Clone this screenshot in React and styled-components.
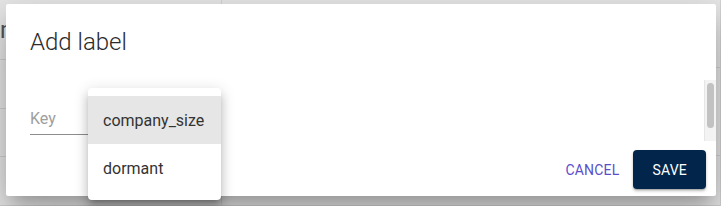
import React from 'react';
import styled, { createGlobalStyle } from 'styled-components';

const GlobalStyle = createGlobalStyle`
  html, body {
    margin: 0;
    padding: 0;
    background: #e8e8e8;
    font-family: Roboto, "Liberation Sans", sans-serif;
    overflow: hidden;
  }
`;

const Page = styled.div`
  position: relative;
  width: 721px;
  height: 206px;
  overflow: hidden;
  background: #e9e9e9;
`;

const Backdrop = styled.div`
  display: grid;
  grid-template-columns: 222px 1fr;
  height: 100%;
`;

const BackColumn = styled.div`
  display: flex;
  flex-direction: column;
  border-right: 1px solid #d6d6d6;
`;

const BackRow = styled.div`
  height: ${p => p.h}px;
  border-bottom: 1px solid #d3d3d3;
  color: #555;
  box-sizing: border-box;
  display: flex;
  align-items: center;
  justify-content: ${p => (p.right ? 'flex-end' : 'flex-start')};
  font-size: ${p => p.size || 14}px;
`;

const Dialog = styled.div`
  position: absolute;
  left: 6px;
  top: 4px;
  width: 710px;
  height: 192px;
  background: #fff;
  border-radius: 2px;
  box-shadow: 0 11px 15px -7px rgba(0, 0, 0, 0.2), 0 24px 38px 3px rgba(0, 0, 0, 0.14),
    0 9px 46px 8px rgba(0, 0, 0, 0.12);
  display: flex;
  flex-direction: column;
  box-sizing: border-box;
`;

const Title = styled.h2`
  margin: 0;
  padding: 24px 24px 0 24px;
  font-size: 24px;
  font-weight: 300;
  line-height: 28px;
  color: #2b2b2b;
`;

const Content = styled.div`
  padding: 49px 24px 0 24px;
`;

const Field = styled.div`
  width: 180px;
  border-bottom: 1px solid #8c8c8c;
  padding: 4px 0 6px 0;
`;

const Placeholder = styled.span`
  font-size: 16px;
  line-height: 19px;
  color: #9e9e9e;
`;

const Actions = styled.div`
  margin-top: auto;
  display: flex;
  justify-content: flex-end;
  align-items: center;
  gap: 6px;
  padding: 0 10px 7px 0;
`;

const Button = styled.button`
  font-family: Roboto, "Liberation Sans", sans-serif;
  font-size: 14px;
  font-weight: 400;
  letter-spacing: 0.2px;
  text-transform: uppercase;
  border: none;
  border-radius: 4px;
  height: 39px;
  cursor: pointer;
  padding: 0 ${p => (p.primary ? 19 : 8)}px;
  min-width: ${p => (p.primary ? 72 : 0)}px;
  color: ${p => (p.primary ? '#fff' : '#5a4fc9')};
  background: ${p => (p.primary ? '#02264b' : 'transparent')};
  box-shadow: ${p =>
    p.primary ? '0 2px 3px rgba(0,0,0,0.25), 0 1px 1px rgba(0,0,0,0.14)' : 'none'};
`;

const Scrollbar = styled.div`
  position: absolute;
  right: 0;
  top: 76px;
  width: 12px;
  height: 61px;
  background: #f3f3f3;
  border-left: 1px solid #e6e6e6;
  box-sizing: border-box;
  display: flex;
  justify-content: center;
  padding-top: 3px;
`;

const Thumb = styled.div`
  width: 7px;
  height: 45px;
  border-radius: 4px;
  background: #c2c2c2;
`;

const Menu = styled.ul`
  position: absolute;
  left: 88px;
  top: 88px;
  width: 133px;
  margin: 0;
  padding: 8px 0;
  list-style: none;
  background: #fff;
  border-radius: 4px;
  box-shadow: 0 5px 5px -3px rgba(0, 0, 0, 0.2), 0 8px 10px 1px rgba(0, 0, 0, 0.14),
    0 3px 14px 2px rgba(0, 0, 0, 0.12);
`;

const MenuItem = styled.li`
  height: 48px;
  display: flex;
  align-items: center;
  padding: 0 15px;
  font-size: 16px;
  color: #333;
  background: ${p => (p.active ? '#e6e6e6' : 'transparent')};
`;

export default function App() {
  return (
    <Page>
      <GlobalStyle />
      <Backdrop>
        <BackColumn>
          <BackRow h={60} size={24}>m</BackRow>
          <BackRow h={49} />
          <BackRow h={48} />
          <BackRow h={49} />
        </BackColumn>
        <BackColumn>
          <BackRow h={68} right />
          <BackRow h={88} right />
          <BackRow h={50} right />
        </BackColumn>
      </Backdrop>
      <Dialog>
        <Title>Add label</Title>
        <Content>
          <Field>
            <Placeholder>Key</Placeholder>
          </Field>
        </Content>
        <Actions>
          <Button>Cancel</Button>
          <Button primary>Save</Button>
        </Actions>
        <Scrollbar>
          <Thumb />
        </Scrollbar>
      </Dialog>
      <Menu>
        <MenuItem active>company_size</MenuItem>
        <MenuItem>dormant</MenuItem>
      </Menu>
    </Page>
  );
}
